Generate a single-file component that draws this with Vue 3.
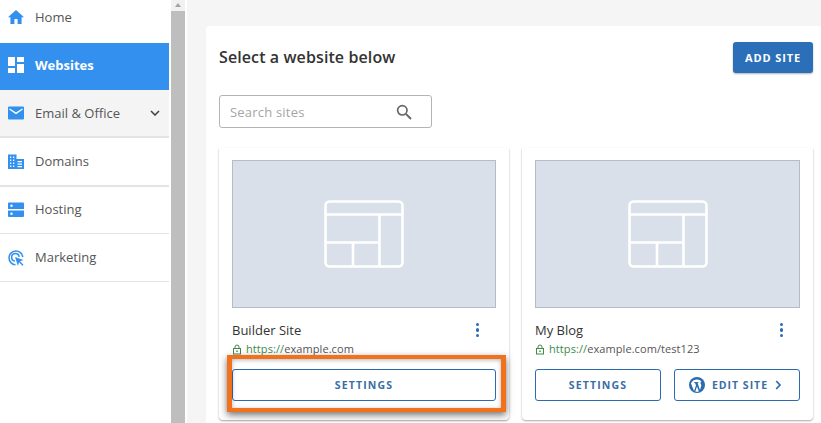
<script setup>
const navItems = [
  { label: 'Home', icon: 'home' },
  { label: 'Websites', icon: 'web', active: true },
  { label: 'Email & Office', icon: 'mail', tinted: true, caret: true, thick: true },
  { label: 'Domains', icon: 'domain', thick: true, short: true },
  { label: 'Hosting', icon: 'host', short: true },
  { label: 'Marketing', icon: 'market' }
]
const sites = [
  { name: 'Builder Site', url: 'https://example.com', highlight: true },
  { name: 'My Blog', url: 'https://example.com/test123', edit: true, wide: true }
]
</script>

<template>
  <div class="page">
    <aside class="sidebar">
      <nav class="nav">
        <a
          v-for="item in navItems"
          :key="item.label"
          class="nav-item"
          :class="{ active: item.active, tinted: item.tinted, thick: item.thick, short: item.short, first: item.icon === 'home' }"
        >
          <svg class="nav-icon" viewBox="0 0 16 16" width="16" height="16">
            <path v-if="item.icon === 'home'" d="M6.400 15V10h3.200v5h4V8.200H16L8 1 0 8.200h2.400V15z" fill="currentColor" />
            <path v-else-if="item.icon === 'web'" d="M0 0h7v9H0zM9 0h7v5H9zM9 7h7v9H9zM0 11h7v5H0z" fill="currentColor" />
            <g v-else-if="item.icon === 'mail'">
              <rect y="1.500" width="16" height="13" rx="1" fill="currentColor" />
              <path d="M1.500 4 8 8.400 14.500 4" fill="none" stroke="#fff" stroke-width="1.300" />
            </g>
            <g v-else-if="item.icon === 'domain'">
              <path d="M0 .5h8.500v4.500H16V15H0z" fill="currentColor" />
              <path d="M2 2.500h1.300V4H2zM5 2.500h1.300V4H5zM2 5.500h1.300V7H2zM5 5.500h1.300V7H5zM2 8.500h1.300V10H2zM5 8.500h1.300V10H5zM2 11.500h1.300V13H2zM5 11.500h1.300V13H5zM9.500 7H14v1.200H9.500zM9.500 9.500H14v1.200H9.500zM9.500 12H14v1.200H9.500z" fill="#fff" />
            </g>
            <g v-else-if="item.icon === 'host'">
              <path d="M1 .5h14a1 1 0 0 1 1 1V7H0V1.500a1 1 0 0 1 1-1zM0 8.500h16V14a1 1 0 0 1-1 1H1a1 1 0 0 1-1-1z" fill="currentColor" />
              <circle cx="3.500" cy="3.800" r="1.200" fill="#fff" />
              <circle cx="3.500" cy="11.700" r="1.200" fill="#fff" />
            </g>
            <g v-else>
              <path d="M14.800 7.200A6.900 6.900 0 1 0 7.500 14.800" fill="none" stroke="currentColor" stroke-width="1.500" />
              <path d="M11.200 6.800a3.800 3.800 0 1 0-4.300 4.300" fill="none" stroke="currentColor" stroke-width="1.500" />
              <path d="M7 7l8.500 3-3.500 1.300 3.500 3.500-1 1-3.500-3.500L10 16z" fill="currentColor" />
            </g>
          </svg>
          <span class="nav-label">{{ item.label }}</span>
          <svg v-if="item.caret" class="caret" viewBox="0 0 10 6" width="10" height="6">
            <path d="M1 1l4 4 4-4" fill="none" stroke="#444" stroke-width="1.600" />
          </svg>
        </a>
      </nav>
      <div class="scrollbar">
        <div class="arrow"></div>
        <div class="thumb"></div>
      </div>
    </aside>

    <main class="main">
      <section class="panel">
        <header class="head">
          <h1>Select a website below</h1>
          <button class="add-btn">ADD SITE</button>
        </header>
        <div class="search">
          <span>Search sites</span>
          <svg viewBox="0 0 16 16" width="16" height="16">
            <circle cx="6.300" cy="6.300" r="4.700" fill="none" stroke="#666" stroke-width="1.700" />
            <path d="M9.900 9.900 15 15" stroke="#666" stroke-width="2" />
          </svg>
        </div>
        <div class="grid">
          <article v-for="site in sites" :key="site.name" class="card" :class="{ wide: site.wide }">
            <div class="thumbnail">
              <svg viewBox="0 0 80 68" width="80" height="68">
                <g fill="none" stroke="#fff" stroke-width="2.600">
                  <rect x="1.500" y="1.500" width="77" height="65" rx="4" />
                  <path d="M1.500 14.500h77M55.500 14.500v52M1.500 42.500h54M29 42.500v24" />
                </g>
              </svg>
            </div>
            <div class="info">
              <div class="name-row">
                <span class="name">{{ site.name }}</span>
                <span class="dots"><i></i><i></i><i></i></span>
              </div>
              <div class="url">
                <svg viewBox="0 0 10 11" width="10" height="11">
                  <path d="M3 5V3a2 2 0 0 1 4 0v2" fill="none" stroke="#3d8b47" stroke-width="1" />
                  <rect x="1.500" y="4.500" width="7" height="5.500" fill="none" stroke="#3d8b47" stroke-width="1" />
                  <rect x="4.300" y="6.500" width="1.400" height="1.500" fill="#3d8b47" />
                </svg>
                <span><span class="scheme">https://</span>{{ site.url.slice(8) }}</span>
              </div>
            </div>
            <div class="actions">
              <button class="outline">SETTINGS</button>
              <button v-if="site.edit" class="outline edit">
                <svg class="wp" viewBox="0 0 16 16" width="16" height="16">
                  <circle cx="8" cy="8" r="8" fill="#2b6cb0" />
                  <path d="M2 6.500 5 14l2-5.500-1-2.700H5V5h4.500v.8h-1L11 13l1.200-4c.4-1.400-.7-2-.7-3.200 0-.8.500-1.300 1.200-1.300a6.800 6.800 0 0 0-10.300 1z" fill="#fff" />
                  <path d="M8 9.500 6.300 14.500a6.700 6.700 0 0 0 3.600-.1z" fill="#fff" />
                </svg>
                <span>EDIT SITE</span>
                <svg viewBox="0 0 7 10" width="7" height="10">
                  <path d="M1.200 1 5 5 1.200 9" fill="none" stroke="#2b6cb0" stroke-width="1.700" />
                </svg>
              </button>
            </div>
            <div v-if="site.highlight" class="callout"></div>
          </article>
        </div>
      </section>
    </main>
  </div>
</template>

<style>
html, body {
  margin: 0;
  overflow: hidden;
  background: #f5f5f5;
}
</style>

<style scoped>
.page {
  display: flex;
  width: 821px;
  height: 423px;
  overflow: hidden;
  font-family: "Open Sans", "Liberation Sans", sans-serif;
  color: #444;
}
.sidebar {
  display: flex;
  flex: 0 0 187px;
  background: #fff;
}
.nav {
  flex: 0 0 169px;
}
.nav-item {
  display: flex;
  align-items: center;
  height: 47px;
  padding-left: 8px;
  border-bottom: 1px solid #e3e3e3;
  font-size: 13px;
  color: #555;
}
.nav-item.first {
  height: 43px;
  padding-bottom: 9px;
  box-sizing: border-box;
  border-bottom: 0;
}
.nav-item.thick {
  height: 46px;
  border-bottom: 2px solid #e3e3e3;
}
.nav-item.thick.short {
  height: 47px;
  padding-bottom: 0;
}
.nav-item.short:not(.thick) {
  height: 46px;
}
.nav-item.active {
  height: 47px;
  padding-bottom: 3px;
  box-sizing: border-box;
  background: #3390ee;
  border-bottom: 0;
  color: #fff;
  font-weight: 700;
}
.nav-item.tinted {
  background: #f4f4f4;
}
.nav-icon {
  flex: none;
  color: #3390ee;
}
.active .nav-icon {
  color: #fff;
}
.nav-label {
  margin-left: 11px;
}
.nav-item:nth-child(n+4) .nav-label {
  margin-bottom: 2px;
}
.caret {
  margin-left: auto;
  margin-right: 9px;
}
.scrollbar {
  flex: 0 0 14px;
  margin-left: 2px;
  display: flex;
  flex-direction: column;
  background: #f1f1f1;
}
.arrow {
  width: 0;
  height: 0;
  margin: 3px auto 4px;
  border-left: 3.500px solid transparent;
  border-right: 3.500px solid transparent;
  border-bottom: 4px solid #a3a3a3;
}
.thumb {
  flex: 1;
  background: #bebebe;
}
.main {
  flex: 1;
  padding: 26px 0 0 19px;
  background: #f5f5f5;
}
.panel {
  width: 615px;
  height: 400px;
  box-sizing: border-box;
  padding: 16px 8px 0 13px;
  background: #fff;
  border-radius: 4px 0 0 0;
}
.head {
  display: flex;
  align-items: flex-start;
  justify-content: space-between;
}
h1 {
  margin: 4px 0 0;
  font-size: 16px;
  line-height: 22px;
  font-weight: 600;
  letter-spacing: .1px;
  color: #333;
}
.add-btn {
  width: 80px;
  height: 31px;
  border: 0;
  border-radius: 3px;
  background: #2b6fb9;
  box-shadow: 0 1px 2px rgba(0, 0, 0, .3);
  color: #fff;
  font: 700 11px "Open Sans", sans-serif;
  letter-spacing: .9px;
}
.search {
  display: flex;
  align-items: center;
  justify-content: space-between;
  box-sizing: border-box;
  width: 213px;
  height: 33px;
  margin-top: 22px;
  padding: 0 19px 0 10px;
  border: 1px solid #b4b4b4;
  border-radius: 3px;
  font-size: 13px;
  letter-spacing: .2px;
  color: #a5a5a5;
}
.grid {
  display: flex;
  gap: 13px;
  margin-top: 20px;
}
.card {
  position: relative;
  box-sizing: border-box;
  width: 290px;
  height: 272px;
  padding: 12px 13px 0;
  border-radius: 0 0 4px 4px;
  background: #fff;
  box-shadow: 0 1px 2px rgba(0, 0, 0, .35);
}
.card.wide {
  width: 291px;
}
.thumbnail {
  display: flex;
  align-items: center;
  justify-content: center;
  box-sizing: border-box;
  height: 148px;
  border: 1px solid #b6bcc5;
  background: #dae0ea;
}
.info {
  margin-top: 13px;
}
.name-row {
  display: flex;
  justify-content: space-between;
  align-items: center;
  padding-right: 17px;
  font-size: 13px;
  line-height: 18px;
  color: #333;
}
.dots {
  display: flex;
  flex-direction: column;
  gap: 2px;
}
.dots i {
  width: 3.500px;
  height: 3.500px;
  border-radius: 50%;
  background: #2b6cb0;
}
.url {
  display: flex;
  align-items: center;
  gap: 4px;
  margin-top: 2px;
  font-size: 11px;
  letter-spacing: .08px;
  line-height: 16px;
  color: #555;
}
.scheme {
  color: #3d8b47;
}
.actions {
  display: flex;
  gap: 13px;
  margin-top: 12px;
}
.outline {
  flex: 1;
  display: flex;
  align-items: center;
  justify-content: center;
  gap: 7px;
  height: 32px;
  padding: 0;
  border: 1px solid #2b6cb0;
  border-radius: 3px;
  background: #fff;
  color: #3a6ea5;
  font: 700 10.500px "Open Sans", sans-serif;
  letter-spacing: 1.150px;
}
.outline.edit {
  letter-spacing: 1px;
}
.outline.edit .wp {
  margin-left: -3px;
}
.callout {
  position: absolute;
  left: 8px;
  top: 207px;
  width: 279px;
  height: 57px;
  box-sizing: border-box;
  border: 5px solid #f2711c;
  border-width: 4px 5px;
  box-shadow: 0 3px 7px rgba(0, 0, 0, .55), inset 0 1px 4px rgba(0, 0, 0, .3);
  pointer-events: none;
}
</style>
